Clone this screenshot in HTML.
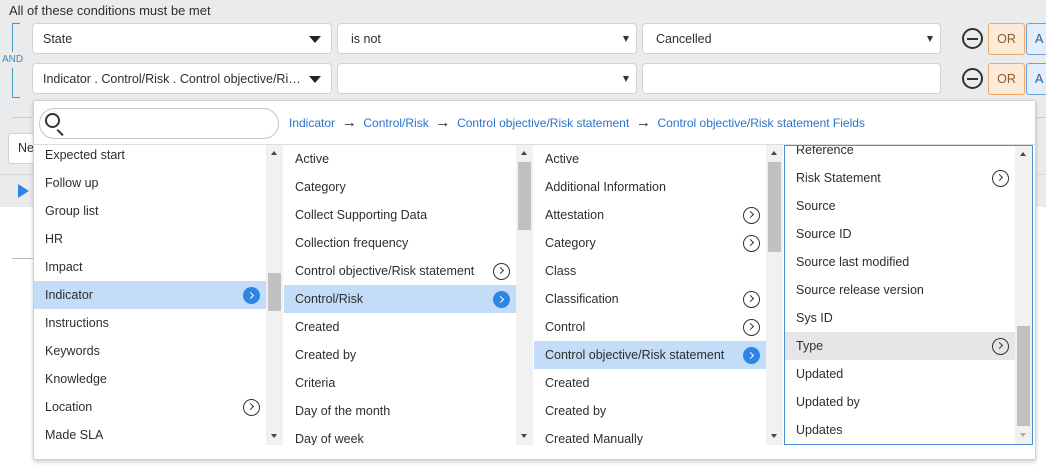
<!DOCTYPE html>
<html><head><style>
*{box-sizing:border-box;margin:0;padding:0}
body{width:1046px;height:470px;overflow:hidden;background:#fff;font-family:"Liberation Sans",sans-serif;font-size:12.5px;color:#2e2e2e;position:relative}
.a{position:absolute}
.sel{position:absolute;background:#fff;border:1px solid #cfd2d6;border-radius:4px;height:31px;line-height:31px;padding-left:10px}
.tri{position:absolute;width:0;height:0;border-left:6px solid transparent;border-right:6px solid transparent;border-top:7px solid #222}
.stri{position:absolute;width:0;height:0;border-left:3.5px solid transparent;border-right:3.5px solid transparent;border-top:6px solid #333}
.col{position:absolute;overflow:hidden}
.it{position:absolute;left:0;right:0;height:28px;line-height:28px;padding-left:11px}
.hl{background:#c3dcf7}
.gr{background:#e4e6e8}
.ci{position:absolute;right:6px;top:6px;width:17px;height:17px;border:1.5px solid #333;border-radius:50%}
.ci:after{content:"";position:absolute;left:3.5px;top:4px;width:4px;height:4px;border-top:1.5px solid #333;border-right:1.5px solid #333;transform:rotate(45deg)}
.cb{position:absolute;right:6px;top:6px;width:17px;height:17px;background:#2a86e6;border-radius:50%}
.cb:after{content:"";position:absolute;left:5px;top:5.5px;width:4px;height:4px;border-top:1.5px solid #fff;border-right:1.5px solid #fff;transform:rotate(45deg)}
.sb{position:absolute;width:17px;background:#f1f1f1}
.th{position:absolute;left:2px;width:13px;background:#c1c1c1}
.up,.dn{position:absolute;left:5px;width:0;height:0;border-left:3.5px solid transparent;border-right:3.5px solid transparent}
.up{border-bottom:4px solid #444}
.dn{border-top:4px solid #444}
.bc{color:#2a72c9}
.ar{color:#222;font-size:15px;font-weight:bold}
</style></head><body>
<div class="a" style="left:0;top:0;width:1046px;height:207px;background:#eaebed"></div>
<div class="a" style="left:9px;top:3px;font-size:13px">All of these conditions must be met</div>
<div class="a" style="left:12px;top:23px;width:8px;height:75px;border:1px solid #4a9bb8;border-right:none"></div>
<div class="a" style="left:4px;top:52px;width:22px;height:16px;background:#eaebed"></div>
<div class="a" style="left:2px;top:54px;font-size:10px;color:#3d8bb0">AND</div>
<div class="sel" style="left:32px;top:23px;width:300px">State</div><div class="tri" style="left:309px;top:36px"></div>
<div class="sel" style="left:337px;top:23px;width:300px;padding-left:13px">is not</div><div class="stri" style="left:623px;top:36px"></div>
<div class="sel" style="left:642px;top:23px;width:299px;padding-left:13px">Cancelled</div><div class="stri" style="left:927px;top:36px"></div>
<div class="sel" style="left:32px;top:63px;width:300px">Indicator . Control/Risk . Control objective/Ri…</div><div class="tri" style="left:309px;top:76px"></div>
<div class="sel" style="left:337px;top:63px;width:300px"></div><div class="stri" style="left:623px;top:76px"></div>
<div class="sel" style="left:642px;top:63px;width:299px"></div>
<div class="a" style="left:962px;top:28px;width:21px;height:21px;border:2px solid #333;border-radius:50%"><div class="a" style="left:3px;top:7.5px;width:11px;height:2px;background:#333"></div></div>
<div class="a" style="left:962px;top:68px;width:21px;height:21px;border:2px solid #333;border-radius:50%"><div class="a" style="left:3px;top:7.5px;width:11px;height:2px;background:#333"></div></div>
<div class="a" style="left:988px;top:23px;width:37px;height:32px;background:#fdebd9;border:1px solid #f0a868;border-radius:3px;text-align:center;line-height:30px;color:#8a5a2a">OR</div>
<div class="a" style="left:988px;top:63px;width:37px;height:32px;background:#fdebd9;border:1px solid #f0a868;border-radius:3px;text-align:center;line-height:30px;color:#8a5a2a">OR</div>
<div class="a" style="left:1026px;top:23px;width:30px;height:32px;background:#e4eefb;border:1px solid #6a9fe0;border-radius:3px;line-height:30px;padding-left:8px;color:#2a5a9a">A</div>
<div class="a" style="left:1026px;top:63px;width:30px;height:32px;background:#e4eefb;border:1px solid #6a9fe0;border-radius:3px;line-height:30px;padding-left:8px;color:#2a5a9a">A</div>
<div class="a" style="left:12px;top:117px;width:20px;height:1px;background:#ccc"></div>
<div class="a" style="left:1036px;top:117px;width:10px;height:1px;background:#ccc"></div>
<div class="a" style="left:8px;top:133px;width:40px;height:31px;background:#fff;border:1px solid #cfd2d6;border-radius:3px;line-height:29px;padding-left:9px">Ne</div>
<div class="a" style="left:0;top:174px;width:1046px;height:1px;background:#d6d8db"></div>
<div class="a" style="left:18px;top:184px;width:0;height:0;border-top:7px solid transparent;border-bottom:7px solid transparent;border-left:11px solid #2a86e6"></div>
<div class="a" style="left:12px;top:258px;width:22px;height:1px;background:#bbb"></div>

<div class="a" style="left:33px;top:100px;width:1003px;height:360px;background:#fff;border:1px solid #d0d0d0;border-radius:2px;box-shadow:0 2px 4px rgba(0,0,0,.2)"></div>
<div class="a" style="left:39px;top:108px;width:240px;height:31px;border:1px solid #c5c5c5;border-radius:16px"></div>
<div class="a" style="left:45px;top:113px;width:15px;height:15px;border:2px solid #333;border-radius:50%"></div>
<div class="a" style="left:58px;top:129px;width:8px;height:2px;background:#333;transform:rotate(45deg);transform-origin:0 0"></div>
<div class="a" style="left:289px;top:114px;font-size:12px;white-space:pre"><span class="bc">Indicator</span>  <span class="ar">→</span>  <span class="bc">Control/Risk</span>  <span class="ar">→</span>  <span class="bc">Control objective/Risk statement</span>  <span class="ar">→</span>  <span class="bc">Control objective/Risk statement Fields</span></div>
<div class="a" style="left:33px;top:144px;width:1003px;height:1px;background:#ddd"></div>

<div class="col" style="left:34px;top:145px;width:232px;height:300px">
<div class="it" style="top:-4px">Expected start</div><div class="it" style="top:24px">Follow up</div><div class="it" style="top:52px">Group list</div><div class="it" style="top:80px">HR</div><div class="it" style="top:108px">Impact</div><div class="it hl" style="top:136px">Indicator<span class="cb"></span></div><div class="it" style="top:164px">Instructions</div><div class="it" style="top:192px">Keywords</div><div class="it" style="top:220px">Knowledge</div><div class="it" style="top:248px">Location<span class="ci"></span></div><div class="it" style="top:276px">Made SLA</div>
</div>
<div class="sb" style="left:266px;top:145px;height:300px"><div class="up" style="top:6px"></div><div class="th" style="top:128px;height:38px"></div><div class="dn" style="top:289px"></div></div>

<div class="col" style="left:284px;top:145px;width:232px;height:300px">
<div class="it" style="top:0">Active</div><div class="it" style="top:28px">Category</div><div class="it" style="top:56px">Collect Supporting Data</div><div class="it" style="top:84px">Collection frequency</div><div class="it" style="top:112px">Control objective/Risk statement<span class="ci"></span></div><div class="it hl" style="top:140px">Control/Risk<span class="cb"></span></div><div class="it" style="top:168px">Created</div><div class="it" style="top:196px">Created by</div><div class="it" style="top:224px">Criteria</div><div class="it" style="top:252px">Day of the month</div><div class="it" style="top:280px">Day of week</div>
</div>
<div class="sb" style="left:516px;top:145px;height:300px"><div class="up" style="top:6px"></div><div class="th" style="top:17px;height:68px"></div><div class="dn" style="top:289px"></div></div>

<div class="col" style="left:534px;top:145px;width:232px;height:300px">
<div class="it" style="top:0">Active</div><div class="it" style="top:28px">Additional Information</div><div class="it" style="top:56px">Attestation<span class="ci"></span></div><div class="it" style="top:84px">Category<span class="ci"></span></div><div class="it" style="top:112px">Class</div><div class="it" style="top:140px">Classification<span class="ci"></span></div><div class="it" style="top:168px">Control<span class="ci"></span></div><div class="it hl" style="top:196px">Control objective/Risk statement<span class="cb"></span></div><div class="it" style="top:224px">Created</div><div class="it" style="top:252px">Created by</div><div class="it" style="top:280px">Created Manually</div>
</div>
<div class="sb" style="left:766px;top:145px;height:300px"><div class="up" style="top:6px"></div><div class="th" style="top:17px;height:90px"></div><div class="dn" style="top:289px"></div></div>

<div class="a" style="left:784px;top:145px;width:249px;height:300px;border:1px solid #4a8fd6"></div>
<div class="col" style="left:785px;top:146px;width:230px;height:298px">
<div class="it" style="top:-10px">Reference</div><div class="it" style="top:18px">Risk Statement<span class="ci"></span></div><div class="it" style="top:46px">Source</div><div class="it" style="top:74px">Source ID</div><div class="it" style="top:102px">Source last modified</div><div class="it" style="top:130px">Source release version</div><div class="it" style="top:158px">Sys ID</div><div class="it gr" style="top:186px">Type<span class="ci"></span></div><div class="it" style="top:214px">Updated</div><div class="it" style="top:242px">Updated by</div><div class="it" style="top:270px">Updates</div>
</div>
<div class="sb" style="left:1015px;top:146px;height:298px"><div class="up" style="top:6px"></div><div class="th" style="top:180px;height:100px"></div><div class="dn" style="top:287px;opacity:.4"></div></div>
</body></html>
